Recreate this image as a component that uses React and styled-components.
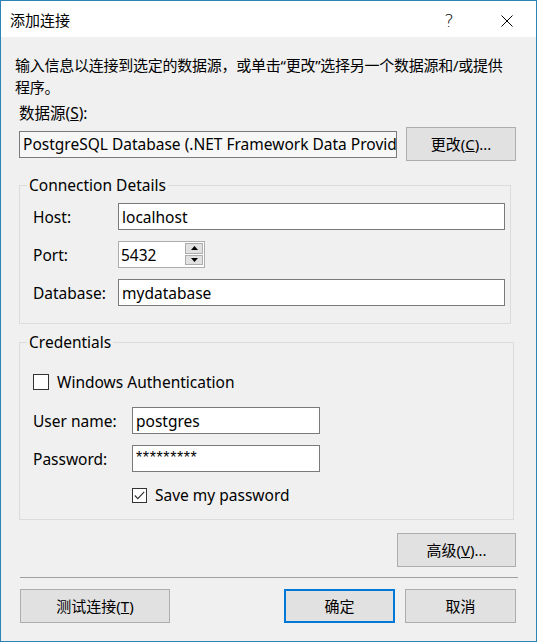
import React from "react";
import styled, { createGlobalStyle } from "styled-components";

const GlobalStyle = createGlobalStyle`
  html, body { margin: 0; padding: 0; background: #ffffff; }
  body { font-family: "Noto Sans", "Noto Sans CJK SC", sans-serif; }
  * { box-sizing: border-box; }
`;

const FONT = `"Noto Sans", "Noto Sans CJK SC", sans-serif`;

const Window = styled.div`
  width: 537px;
  height: 642px;
  border: 1px solid #2b84b5;
  display: flex;
  flex-direction: column;
  background: #f0f0f0;
  font-family: ${FONT};
  font-size: 15.5px;
  color: #000;
`;

const TitleBar = styled.div`
  height: 36px;
  background: #ffffff;
  display: flex;
  align-items: center;
  padding-left: 9px;
`;

const TitleText = styled.div`
  font-size: 15px;
  line-height: 22px;
  flex: 1;
  padding-top: 1px;
`;

const CaptionButton = styled.div`
  width: 58px;
  height: 36px;
  display: flex;
  align-items: center;
  justify-content: center;
  color: #111;
  font-size: 18px;
  font-family: "DejaVu Sans", sans-serif;
  font-weight: 300;
  padding-top: 3px;
`;

const Content = styled.div`
  flex: 1;
  display: flex;
  flex-direction: column;
  padding: 17px 20px 18px 18px;
`;

const Description = styled.div`
  line-height: 22px;
  margin-left: -4px;
  font-size: 15px;
  letter-spacing: -0.25px;
`;

const Label = styled.div`
  line-height: 22px;
  margin-top: ${(p) => p.$mt || 0}px;
  white-space: nowrap;
`;

const SourceRow = styled.div`
  display: flex;
  align-items: center;
  gap: 9px;
  margin-top: 3px;
`;

const TextBox = styled.div`
  height: ${(p) => p.$h || 27}px;
  width: ${(p) => (p.$w ? `${p.$w}px` : "auto")};
  flex: ${(p) => (p.$w ? "none" : 1)};
  min-width: 0;
  background: ${(p) => (p.$readonly ? "#f7f7f7" : "#ffffff")};
  border: 1px solid #7a7a7a;
  display: flex;
  align-items: center;
  padding-left: 3px;
  overflow: hidden;
  white-space: nowrap;
  line-height: 22px;
`;

const Button = styled.div`
  width: ${(p) => p.$w}px;
  height: 34px;
  background: #e1e1e1;
  border: ${(p) => (p.$default ? "2px solid #0078d7" : "1px solid #adadad")};
  display: flex;
  align-items: center;
  justify-content: center;
  white-space: nowrap;
  line-height: 22px;
  flex: none;
  font-size: 15px;
`;

const Group = styled.fieldset`
  margin: ${(p) => p.$mt}px ${(p) => p.$mr}px 0 0;
  padding: ${(p) => p.$pt}px 5px ${(p) => p.$pb}px 13px;
  border: 1px solid #dcdcdc;
  min-width: 0;
`;

const Legend = styled.legend`
  margin-left: -6px;
  padding: 0 2px;
  line-height: 22px;
`;

const FormGrid = styled.div`
  display: grid;
  grid-template-columns: ${(p) => p.$labelW}px 1fr;
  grid-auto-rows: 27px;
  row-gap: 11px;
  align-items: center;
`;

const FieldLabel = styled.div`
  line-height: 22px;
  white-space: nowrap;
`;

const SpinBox = styled.div`
  width: 87px;
  height: 27px;
  background: #fff;
  border: 1px solid #adadad;
  display: flex;
  align-items: stretch;
`;

const SpinValue = styled.div`
  flex: 1;
  display: flex;
  align-items: center;
  padding-left: 2px;
  line-height: 22px;
`;

const SpinButtons = styled.div`
  width: 20px;
  display: flex;
  flex-direction: column;
  gap: 1px;
  padding: 1px 1px 2px 1px;
`;

const SpinButton = styled.div`
  flex: 1;
  background: #e1e1e1;
  border: 1px solid #adadad;
  display: flex;
  align-items: center;
  justify-content: center;
`;

const CheckRow = styled.div`
  display: flex;
  align-items: center;
  height: 22px;
  gap: 8px;
  margin-top: ${(p) => p.$mt || 0}px;
  margin-left: ${(p) => p.$ml || 0}px;
`;

const CheckBox = styled.div`
  width: ${(p) => p.$size}px;
  height: ${(p) => p.$size}px;
  border: 1px solid #333;
  background: #fff;
  display: flex;
  align-items: center;
  justify-content: center;
  flex: none;
`;

const CredGrid = styled(FormGrid)`
  margin-top: 14px;
`;

const RightRow = styled.div`
  display: flex;
  justify-content: flex-end;
  margin-top: 13px;
`;

const Separator = styled.div`
  height: 1px;
  background: #a0a0a0;
  margin: 10px -2px 0 1px;
`;

const BottomRow = styled.div`
  display: flex;
  align-items: center;
  gap: 10px;
  margin-top: 11px;
  padding-left: 1px;
`;

const Spacer = styled.div`
  flex: 1;
`;

const Password = styled.span`
  letter-spacing: 0.6px;
  font-family: "Liberation Sans", sans-serif;
  font-size: 16px;
  position: relative;
  top: -1px;
`;

const Tri = ({ up }) => (
  <svg width="7" height="4" viewBox="0 0 7 4">
    {up ? <path d="M0 4 L3.5 0 L7 4 Z" fill="#000" /> : <path d="M0 0 L3.5 4 L7 0 Z" fill="#000" />}
  </svg>
);

const CloseIcon = () => (
  <svg width="12" height="12" viewBox="0 0 12 12">
    <path d="M0.5 0.5 L11.5 11.5 M11.5 0.5 L0.5 11.5" stroke="#000" strokeWidth="1" fill="none" />
  </svg>
);

const Check = () => (
  <svg width="11" height="9" viewBox="0 0 11 9">
    <path d="M0.8 4.5 L3.8 7.6 L10.2 0.8" stroke="#333" strokeWidth="1.2" fill="none" />
  </svg>
);

export default function App() {
  return (
    <>
      <GlobalStyle />
      <Window>
        <TitleBar>
          <TitleText>添加连接</TitleText>
          <CaptionButton>?</CaptionButton>
          <CaptionButton>
            <CloseIcon />
          </CaptionButton>
        </TitleBar>
        <Content>
          <Description>
            输入信息以连接到选定的数据源，或单击“更改”选择另一个数据源和/或提供
            <br />
            程序。
          </Description>
          <Label $mt={4}>
            数据源(<u>S</u>):
          </Label>
          <SourceRow>
            <TextBox $readonly>PostgreSQL Database (.NET Framework Data Provid</TextBox>
            <Button $w={110}>
              更改(<u>C</u>)...
            </Button>
          </SourceRow>

          <Group $mt={13} $mr={5} $pt={7} $pb={17}>
            <Legend>Connection Details</Legend>
            <FormGrid $labelW={85}>
              <FieldLabel>Host:</FieldLabel>
              <TextBox>localhost</TextBox>
              <FieldLabel>Port:</FieldLabel>
              <SpinBox>
                <SpinValue>5432</SpinValue>
                <SpinButtons>
                  <SpinButton>
                    <Tri up />
                  </SpinButton>
                  <SpinButton>
                    <Tri />
                  </SpinButton>
                </SpinButtons>
              </SpinBox>
              <FieldLabel>Database:</FieldLabel>
              <TextBox>mydatabase</TextBox>
            </FormGrid>
          </Group>

          <Group $mt={7} $mr={2} $pt={18} $pb={13}>
            <Legend>Credentials</Legend>
            <CheckRow>
              <CheckBox $size={16} />
              <span>Windows Authentication</span>
            </CheckRow>
            <CredGrid $labelW={99}>
              <FieldLabel>User name:</FieldLabel>
              <TextBox $w={188}>postgres</TextBox>
              <FieldLabel>Password:</FieldLabel>
              <TextBox $w={188}>
                <Password>*********</Password>
              </TextBox>
            </CredGrid>
            <CheckRow $mt={12} $ml={99}>
              <CheckBox $size={15}>
                <Check />
              </CheckBox>
              <span>Save my password</span>
            </CheckRow>
          </Group>

          <RightRow>
            <Button $w={119}>
              高级(<u>V</u>)...
            </Button>
          </RightRow>
          <Separator />
          <BottomRow>
            <Button $w={150}>
              测试连接(<u>T</u>)
            </Button>
            <Spacer />
            <Button $w={111} $default>
              确定
            </Button>
            <Button $w={111}>取消</Button>
          </BottomRow>
        </Content>
      </Window>
    </>
  );
}
